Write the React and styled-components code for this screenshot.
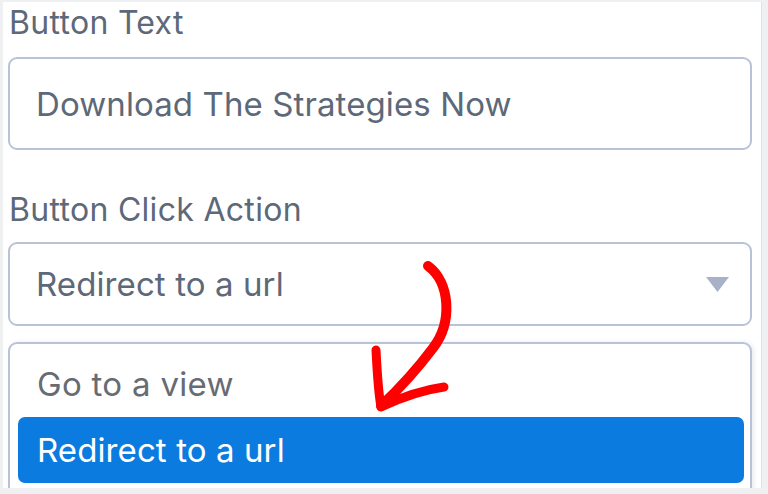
import React from "react";
import styled, { createGlobalStyle } from "styled-components";

const GlobalStyle = createGlobalStyle`
  html, body {
    margin: 0;
    padding: 0;
    background: #eff0f2;
    font-family: "Inter", "Liberation Sans", sans-serif;
  }
`;

const Frame = styled.div`
  position: relative;
  box-sizing: border-box;
  width: 759px;
  height: 486px;
  margin: 2px 0 0 3px;
  padding: 1px 9px 0 5px;
  background: #ffffff;
  border-right: 1px solid #dfe2e7;
  overflow: hidden;
`;

const Label = styled.div`
  font-size: 32px;
  line-height: 40px;
  letter-spacing: 0.3px;
  color: #5d6879;
  padding-left: 1px;
  margin-top: ${(props) => props.top || 0}px;
`;

const Box = styled.div`
  box-sizing: border-box;
  display: flex;
  align-items: center;
  justify-content: space-between;
  height: ${(props) => props.h}px;
  margin-top: ${(props) => props.top}px;
  padding: 0 21px 0 26px;
  border: 2px solid #b9c3d7;
  border-radius: 9px;
  font-size: 33px;
  letter-spacing: 0.1px;
  color: #5d6879;
`;

const Caret = styled.svg`
  width: 23px;
  height: 15px;
  flex-shrink: 0;
`;

const List = styled.div`
  box-sizing: border-box;
  height: 200px;
  margin-top: 16px;
  padding: 7px 6px 0 8px;
  border: 2px solid #b9c3d7;
  border-radius: 9px;
  box-shadow: 2px 0 4px rgba(90, 100, 120, 0.12);
`;

const Option = styled.div`
  height: 66px;
  display: flex;
  align-items: center;
  padding-left: 19px;
  border-radius: 7px;
  font-size: 33px;
  letter-spacing: ${(props) => (props.active ? "0.1px" : "0.3px")};
  color: ${(props) => (props.active ? "#ffffff" : "#676b72")};
  background: ${(props) => (props.active ? "#0b7be0" : "transparent")};
`;

const Arrow = styled.svg`
  position: absolute;
  left: -3px;
  top: -2px;
  width: 768px;
  height: 494px;
  pointer-events: none;
`;

const App = () => {
  const options = ["Go to a view", "Redirect to a url"];
  const selected = 1;

  return (
    <>
      <GlobalStyle />
      <Frame>
        <Label>Button Text</Label>
        <Box h={93} top={14}>
          Download The Strategies Now
        </Box>
        <Label top={40}>Button Click Action</Label>
        <Box h={84} top={12}>
          {options[selected]}
          <Caret viewBox="0 0 23 15">
            <polygon points="0,0 23,0 11.5,15" fill="#a7b2c9" />
          </Caret>
        </Box>
        <List>
          {options.map((item, index) => (
            <Option key={index} active={index === selected}>
              {item}
            </Option>
          ))}
        </List>
        <Arrow viewBox="0 0 768 494">
          <g fill="none" stroke="#ff0000" strokeLinecap="round" strokeLinejoin="round">
            <path strokeWidth="10" d="M428 266 C450 282 453 322 433 348 C418 368 400 388 381 406" />
            <path strokeWidth="9" d="M376 350 C377 370 378 390 381 407 C400 398 422 390 444 387" />
          </g>
        </Arrow>
      </Frame>
    </>
  );
};

export default App;
